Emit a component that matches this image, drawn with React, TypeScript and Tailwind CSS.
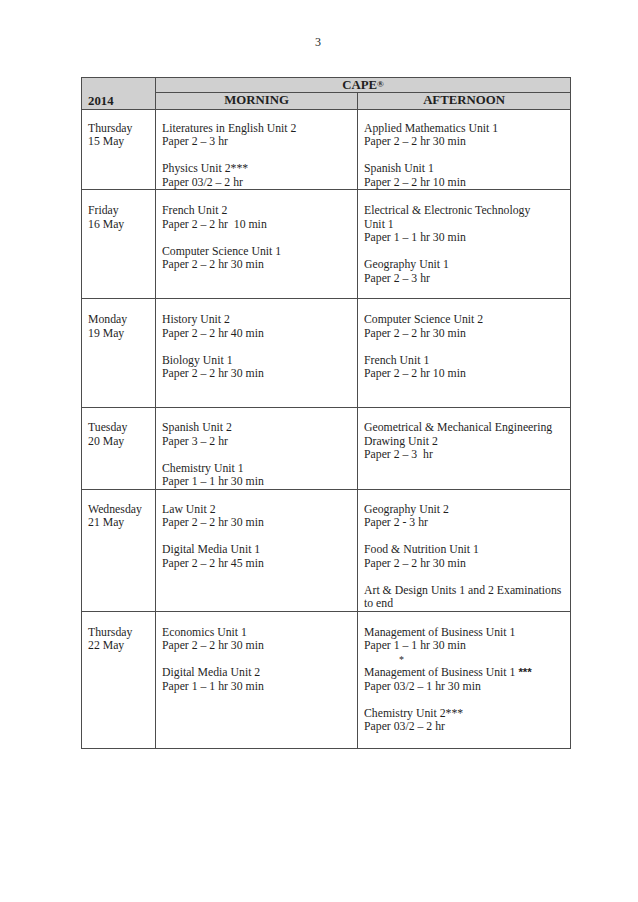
import React from 'react'

type Line = React.ReactNode

type Row = {
  day: string
  date: string
  height: string
  pad: string
  morning: Line[]
  afternoon: Line[]
}

const ROWS: Row[] = [
  {
    day: 'Thursday',
    date: '15 May',
    height: 'h-[80px]',
    pad: 'pt-[12px]',
    morning: ['Literatures in English Unit 2', 'Paper 2 – 3 hr', '', 'Physics Unit 2***', 'Paper 03/2 – 2 hr'],
    afternoon: ['Applied Mathematics Unit 1', 'Paper 2 – 2 hr 30 min', '', 'Spanish Unit 1', 'Paper 2 – 2 hr 10 min'],
  },
  {
    day: 'Friday',
    date: '16 May',
    height: 'h-[109px]',
    pad: 'pt-[14px]',
    morning: ['French Unit 2', 'Paper 2 – 2 hr  10 min', '', 'Computer Science Unit 1', 'Paper 2 – 2 hr 30 min'],
    afternoon: [
      'Electrical & Electronic Technology',
      'Unit 1',
      'Paper 1 – 1 hr 30 min',
      '',
      'Geography Unit 1',
      'Paper 2 – 3 hr',
    ],
  },
  {
    day: 'Monday',
    date: '19 May',
    height: 'h-[109px]',
    pad: 'pt-[14px]',
    morning: ['History Unit 2', 'Paper 2 – 2 hr 40 min', '', 'Biology Unit 1', 'Paper 2 – 2 hr 30 min'],
    afternoon: ['Computer Science Unit 2', 'Paper 2 – 2 hr 30 min', '', 'French Unit 1', 'Paper 2 – 2 hr 10 min'],
  },
  {
    day: 'Tuesday',
    date: '20 May',
    height: 'h-[81px]',
    pad: 'pt-[13px]',
    morning: ['Spanish Unit 2', 'Paper 3 – 2 hr', '', 'Chemistry Unit 1', 'Paper 1 – 1 hr 30 min'],
    afternoon: ['Geometrical & Mechanical Engineering', 'Drawing Unit 2', 'Paper 2 – 3  hr'],
  },
  {
    day: 'Wednesday',
    date: '21 May',
    height: 'h-[121px]',
    pad: 'pt-[13px]',
    morning: ['Law Unit 2', 'Paper 2 – 2 hr 30 min', '', 'Digital Media Unit 1', 'Paper 2 – 2 hr 45 min'],
    afternoon: [
      'Geography Unit 2',
      'Paper 2 - 3 hr',
      '',
      'Food & Nutrition Unit 1',
      'Paper 2 – 2 hr 30 min',
      '',
      'Art & Design Units 1 and 2 Examinations',
      'to end',
    ],
  },
  {
    day: 'Thursday',
    date: '22 May',
    height: 'h-[137px]',
    pad: 'pt-[14px]',
    morning: ['Economics Unit 1', 'Paper 2 – 2 hr 30 min', '', 'Digital Media Unit 2', 'Paper 1 – 1 hr 30 min'],
    afternoon: [
      'Management of Business Unit 1',
      'Paper 1 – 1 hr 30 min',
      <span className="pl-[35px] text-[10px]">*</span>,
      <>
        Management of Business Unit 1{' '}
        <span className="font-bold font-['Liberation_Sans',sans-serif] text-[11.5px]">***</span>
      </>,
      'Paper 03/2 – 1 hr 30 min',
      '',
      'Chemistry Unit 2***',
      'Paper 03/2 – 2 hr',
    ],
  },
]

function Lines({ lines }: { lines: Line[] }) {
  return (
    <div className="flex flex-col">
      {lines.map((l, i) => (
        <div key={i} className="h-[13.5px] whitespace-pre">
          {l === '' ? '\u00a0' : l}
        </div>
      ))}
    </div>
  )
}

export default function App() {
  return (
    <div className="w-[638px] h-[902px] bg-white font-['Liberation_Serif','Times_New_Roman',serif] text-[11.75px] leading-[13.5px] text-[#1f1f1f]">
      <div className="pt-[36px] text-center text-[12px] pr-[2px]">3</div>

      <table className="mt-[27px] ml-[81px] w-[489px] border-collapse table-fixed">
        <colgroup>
          <col className="w-[74px]" />
          <col className="w-[202px]" />
          <col className="w-[213px]" />
        </colgroup>
        <thead>
          <tr className="h-[15px]">
            <th
              rowSpan={2}
              className="border border-[#4d4d4d] bg-[#d0d0d0] align-bottom text-left px-[6px] pb-0 text-[12.8px] leading-[15px] font-bold"
            >
              2014
            </th>
            <th
              colSpan={2}
              className="border border-[#4d4d4d] bg-[#d0d0d0] text-center text-[12.8px] leading-[14px] font-bold"
            >
              CAPE<sup className="text-[9px] relative -top-[2px]">®</sup>
            </th>
          </tr>
          <tr className="h-[17px]">
            <th className="border border-[#4d4d4d] bg-[#d0d0d0] text-center text-[12.8px] leading-[15px] font-bold">
              MORNING
            </th>
            <th className="border border-[#4d4d4d] bg-[#d0d0d0] text-center text-[12.8px] leading-[15px] font-bold">
              AFTERNOON
            </th>
          </tr>
        </thead>
        <tbody>
          {ROWS.map((r, i) => (
            <tr key={i} className={r.height}>
              <td className={`border border-[#4d4d4d] align-top px-[6px] ${r.pad}`}>
                <Lines lines={[r.day, r.date]} />
              </td>
              <td className={`border border-[#4d4d4d] align-top px-[6px] ${r.pad}`}>
                <Lines lines={r.morning} />
              </td>
              <td className={`border border-[#4d4d4d] align-top px-[6px] ${r.pad}`}>
                <Lines lines={r.afternoon} />
              </td>
            </tr>
          ))}
        </tbody>
      </table>
    </div>
  )
}
